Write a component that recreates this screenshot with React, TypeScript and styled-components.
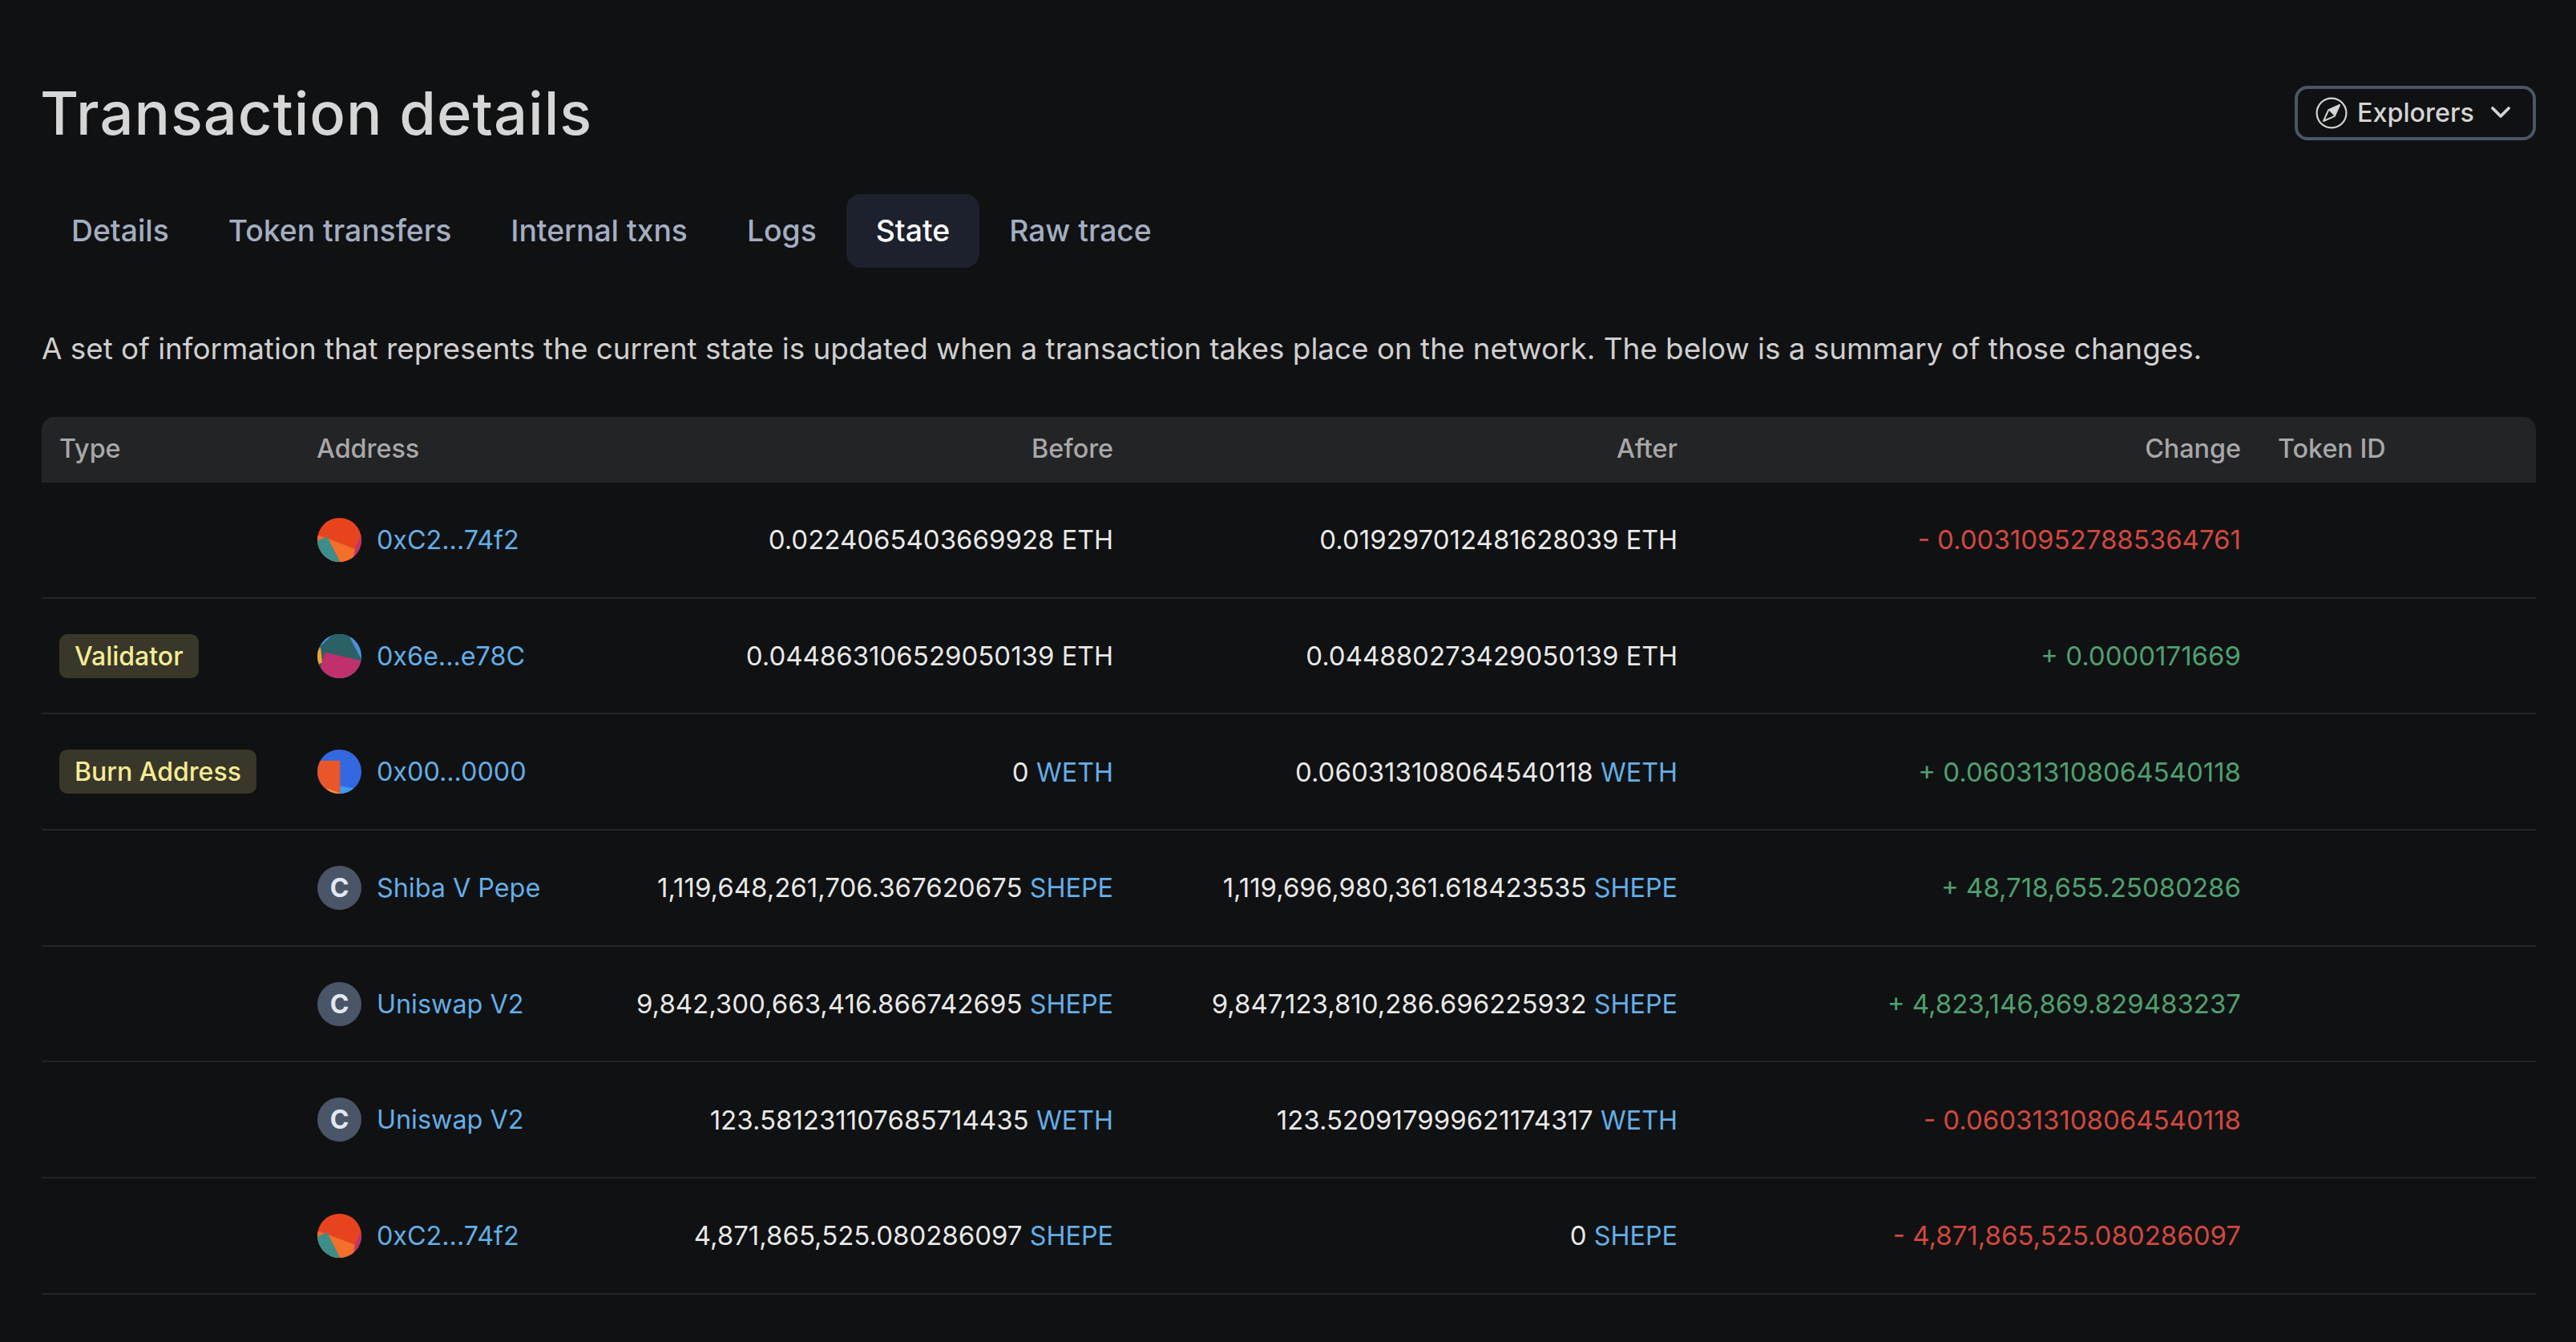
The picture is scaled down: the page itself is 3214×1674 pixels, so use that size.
import React from 'react';
import styled, { createGlobalStyle } from 'styled-components';
import { ChevronDown } from 'lucide-react';

const GlobalStyle = createGlobalStyle`
    html, body {
        margin: 0;
        background: #101112;
    }
    body {
        font-family: 'Inter', 'Liberation Sans', sans-serif;
    }
`;

type Tone = 'up' | 'down';
type Holder = 'sender' | 'validator' | 'burn' | 'contract';

interface Amount {
    value: string;
    unit: string;
    linked?: boolean;
}

interface Row {
    badge?: string;
    holder: Holder;
    name: string;
    before: Amount;
    after: Amount;
    change: string;
    tone: Tone;
}

const rows: Row[] = [
    {
        holder: 'sender',
        name: '0xC2...74f2',
        before: { value: '0.0224065403669928', unit: 'ETH' },
        after: { value: '0.019297012481628039', unit: 'ETH' },
        change: '- 0.003109527885364761',
        tone: 'down',
    },
    {
        badge: 'Validator',
        holder: 'validator',
        name: '0x6e...e78C',
        before: { value: '0.044863106529050139', unit: 'ETH' },
        after: { value: '0.044880273429050139', unit: 'ETH' },
        change: '+ 0.0000171669',
        tone: 'up',
    },
    {
        badge: 'Burn Address',
        holder: 'burn',
        name: '0x00...0000',
        before: { value: '0', unit: 'WETH', linked: true },
        after: { value: '0.060313108064540118', unit: 'WETH', linked: true },
        change: '+ 0.060313108064540118',
        tone: 'up',
    },
    {
        holder: 'contract',
        name: 'Shiba V Pepe',
        before: { value: '1,119,648,261,706.367620675', unit: 'SHEPE', linked: true },
        after: { value: '1,119,696,980,361.618423535', unit: 'SHEPE', linked: true },
        change: '+ 48,718,655.25080286',
        tone: 'up',
    },
    {
        holder: 'contract',
        name: 'Uniswap V2',
        before: { value: '9,842,300,663,416.866742695', unit: 'SHEPE', linked: true },
        after: { value: '9,847,123,810,286.696225932', unit: 'SHEPE', linked: true },
        change: '+ 4,823,146,869.829483237',
        tone: 'up',
    },
    {
        holder: 'contract',
        name: 'Uniswap V2',
        before: { value: '123.581231107685714435', unit: 'WETH', linked: true },
        after: { value: '123.520917999621174317', unit: 'WETH', linked: true },
        change: '- 0.060313108064540118',
        tone: 'down',
    },
    {
        holder: 'sender',
        name: '0xC2...74f2',
        before: { value: '4,871,865,525.080286097', unit: 'SHEPE', linked: true },
        after: { value: '0', unit: 'SHEPE', linked: true },
        change: '- 4,871,865,525.080286097',
        tone: 'down',
    },
];

const tabs = ['Details', 'Token transfers', 'Internal txns', 'Logs', 'State', 'Raw trace'];

const Identicon = ({ holder }: { holder: Holder }) => {
    if (holder === 'contract') return <ContractIcon>C</ContractIcon>;
    return (
        <IconDisc viewBox="0 0 165 165">
            {holder === 'sender' && (
                <>
                    <rect width="165" height="165" fill="#e8431f" />
                    <polygon points="0,66 27,73 0,90" fill="#f36f2a" />
                    <polygon points="27,73 140,116 165,60 165,165 130,165" fill="#c2336b" />
                    <polygon points="27,73 141,116 134,150 90,168 50,165" fill="#f36f2a" />
                    <polygon points="36,70 88,170 0,170 0,86" fill="#3d8d8a" />
                </>
            )}
            {holder === 'validator' && (
                <>
                    <rect width="165" height="165" fill="#4a90e2" />
                    <polygon points="8,48 60,0 115,0 165,95 165,165 0,165" fill="#2b6165" />
                    <polygon points="0,62 12,48 18,106 0,116" fill="#f0a52c" />
                    <polygon points="28,68 165,100 165,165 12,165 12,125" fill="#c0306c" />
                </>
            )}
            {holder === 'burn' && (
                <>
                    <rect width="165" height="165" fill="#3468e0" />
                    <polygon points="85,136 140,146 100,170 85,170" fill="#3f9bf0" />
                    <polygon points="0,41 85,41 85,168 0,168" fill="#e8562a" />
                    <polygon points="34,145 85,163 85,170 50,170" fill="#f0913a" />
                </>
            )}
        </IconDisc>
    );
};

const CompassIcon = () => (
    <CompassSvg viewBox="0 0 20 20">
        <circle cx="10" cy="10" r="9.2" fill="none" stroke="currentColor" strokeWidth="1.1" />
        <polygon
            points="15,5 8.1,8.1 5,15 11.9,11.9"
            fill="none"
            stroke="currentColor"
            strokeWidth="1"
            strokeLinejoin="round"
        />
        <polygon points="15,5 8.1,8.1 11.9,11.9" fill="currentColor" />
    </CompassSvg>
);

const AmountCell = ({ amount }: { amount: Amount }) => (
    <NumberCell>
        {amount.value} {amount.linked ? <Link>{amount.unit}</Link> : <Unit>{amount.unit}</Unit>}
    </NumberCell>
);

const App = () => (
    <Page>
        <GlobalStyle />
        <Heading>
            <Title>Transaction details</Title>
            <ExplorersButton>
                <CompassIcon />
                <span>Explorers</span>
                <Chevron size={40} strokeWidth={2.3} />
            </ExplorersButton>
        </Heading>
        <Tabs>
            {tabs.map((tab) => (
                <Tab key={tab} active={tab === 'State'}>
                    {tab}
                </Tab>
            ))}
        </Tabs>
        <Description>
            A set of information that represents the current state is updated when a transaction
            takes place on the network. The below is a summary of those changes.
        </Description>
        <Table>
            <colgroup>
                <col width="321" />
                <col width="336" />
                <col width="704" />
                <col width="704" />
                <col width="703" />
                <col width="344" />
            </colgroup>
            <thead>
                <tr>
                    <HeadCell first>Type</HeadCell>
                    <HeadCell>Address</HeadCell>
                    <HeadCell right>Before</HeadCell>
                    <HeadCell right>After</HeadCell>
                    <HeadCell right>Change</HeadCell>
                    <HeadCell last>Token ID</HeadCell>
                </tr>
            </thead>
            <tbody>
                {rows.map((row, index) => (
                    <tr key={index}>
                        <Cell>{row.badge && <Badge>{row.badge}</Badge>}</Cell>
                        <Cell>
                            <AddressLine>
                                <Identicon holder={row.holder} />
                                <Link>{row.name}</Link>
                            </AddressLine>
                        </Cell>
                        <AmountCell amount={row.before} />
                        <AmountCell amount={row.after} />
                        <ChangeCell tone={row.tone}>{row.change}</ChangeCell>
                        <Cell />
                    </tr>
                ))}
            </tbody>
        </Table>
    </Page>
);

export default App;

const Page = styled.div`
    background: #101112;
    box-sizing: border-box;
    color: rgba(255, 255, 255, 0.92);
    height: 1674px;
    overflow: hidden;
    padding: 107px 50px 0 52px;
    width: 3214px;
`;

const Heading = styled.div`
    align-items: center;
    display: flex;
    height: 68px;
    justify-content: space-between;
`;

const Title = styled.h1`
    color: #d6d6d6;
    font-size: 74px;
    font-weight: 500;
    letter-spacing: 1px;
    line-height: 68px;
    margin: 0 0 0 -2px;
`;

const ExplorersButton = styled.button`
    align-items: center;
    background: transparent;
    border: 4px solid #4a5568;
    border-radius: 16px;
    box-sizing: border-box;
    color: #d4d4d4;
    display: flex;
    font-family: inherit;
    font-size: 32.3px;
    font-weight: 500;
    gap: 12px;
    height: 68px;
    padding: 0 18px 2px 22px;
    width: 301px;
`;

const Chevron = styled(ChevronDown)`
    flex: none;
    margin-left: 1px;
`;

const CompassSvg = styled.svg`
    flex: none;
    height: 40px;
    margin-bottom: -2px;
    width: 40px;
`;

const Tabs = styled.div`
    display: flex;
    margin-top: 67px;
`;

const Tab = styled.div<{ active?: boolean }>`
    align-items: center;
    background: ${(props) => (props.active ? '#1c212d' : 'transparent')};
    border-radius: 18px;
    box-sizing: border-box;
    color: ${(props) => (props.active ? '#ffffff' : '#a3aec2')};
    display: flex;
    font-size: 37.3px;
    font-weight: 500;
    height: 92px;
    padding: 0 37px 2px;
`;

const Description = styled.p`
    color: #cfcfcf;
    font-size: 36.85px;
    line-height: 56px;
    margin: 73px 0 0;
`;

const Table = styled.table`
    border-collapse: separate;
    border-spacing: 0;
    font-size: 32.3px;
    margin-top: 57px;
    table-layout: fixed;
    width: 3112px;
`;

const HeadCell = styled.th<{ right?: boolean; first?: boolean; last?: boolean }>`
    background: #232426;
    border-radius: ${(props) => (props.first ? '16px 0 0 0' : props.last ? '0 16px 0 0' : '0')};
    box-sizing: border-box;
    color: #a8a8a8;
    font-weight: 500;
    height: 82px;
    padding: 0 24px 4px 22px;
    text-align: ${(props) => (props.right ? 'right' : 'left')};
`;

const Cell = styled.td`
    border-bottom: 2px solid #242527;
    box-sizing: border-box;
    height: 144.7px;
    padding: 0 24px 0 22px;
    vertical-align: middle;
`;

const NumberCell = styled(Cell)`
    font-size: 33px;
    text-align: right;
    white-space: nowrap;
`;

const ChangeCell = styled(NumberCell)<{ tone: Tone }>`
    color: ${(props) => (props.tone === 'up' ? '#4f9f70' : '#d1483f')};
`;

const Badge = styled.span`
    align-items: center;
    background: #38372a;
    border-radius: 10px;
    color: #f6ec94;
    display: inline-flex;
    font-size: 32px;
    font-weight: 500;
    height: 55px;
    padding: 0 19px;
    white-space: nowrap;
`;

const AddressLine = styled.div`
    align-items: center;
    display: flex;
    gap: 19px;
    margin-left: 1px;
`;

const Link = styled.span`
    color: #63aee8;
    font-size: 32.3px;
`;

const Unit = styled.span`
    font-size: 32.3px;
`;

const IconDisc = styled.svg`
    border-radius: 50%;
    flex: none;
    height: 55px;
    width: 55px;
`;

const ContractIcon = styled.div`
    align-items: center;
    background: #4a5568;
    border-radius: 50%;
    color: #e2e8f0;
    display: flex;
    flex: none;
    font-size: 32px;
    font-weight: 700;
    height: 55px;
    justify-content: center;
    width: 55px;
`;
